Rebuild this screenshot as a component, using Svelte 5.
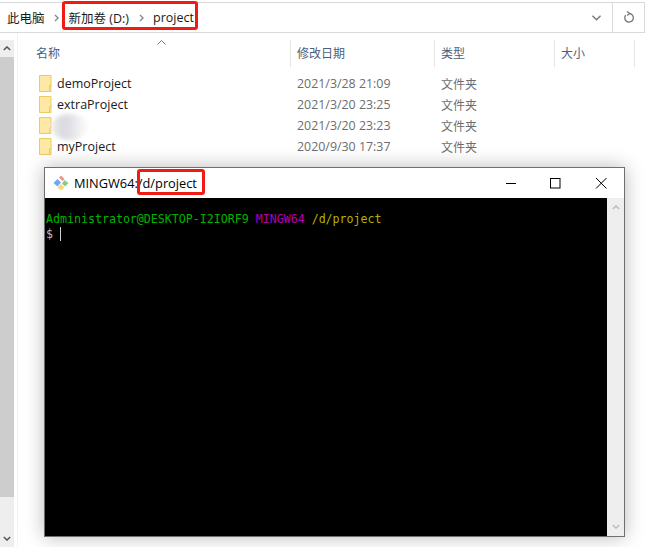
<script>
  const folders = [
    { name: 'demoProject', date: '2021/3/28 21:09' },
    { name: 'extraProject', date: '2021/3/20 23:25' },
    { name: '', date: '2021/3/20 23:23', blurred: true },
    { name: 'myProject', date: '2020/9/30 17:37' }
  ];
</script>

<div class="desktop">
  <div class="address">
    <div class="crumbs">
      <span>此电脑</span>
      <svg class="sep" viewBox="0 0 5 8"><path d="M1 1 L4 4 L1 7" /></svg>
      <span>新加卷 (D:)</span>
      <svg class="sep" viewBox="0 0 5 8"><path d="M1 1 L4 4 L1 7" /></svg>
      <span>project</span>
    </div>
    <svg class="drop" viewBox="0 0 10 6"><path d="M0.5 0.5 L5 5 L9.5 0.5" /></svg>
    <div class="refresh">
      <svg viewBox="0 0 12 13"><path d="M6.5 2.5 A4.3 4.3 0 1 1 2.6 4.2" /><path class="head" d="M4 0.5 L6.8 2.5 L4 4.6" /></svg>
    </div>
  </div>

  <div class="pane">
    <div class="vscroll">
      <svg class="arrow" viewBox="0 0 10 6"><path d="M1 5 L5 1 L9 5" /></svg>
      <div class="thumb"></div>
      <div class="track"></div>
      <svg class="arrow" viewBox="0 0 10 6"><path d="M1 1 L5 5 L9 1" /></svg>
    </div>
    <div class="list">
      <div class="head-row">
        <div class="col c-name">名称<svg class="sort" viewBox="0 0 9 5"><path d="M0.5 4.5 L4.5 0.5 L8.5 4.5" /></svg></div>
        <div class="col c-date">修改日期</div>
        <div class="col c-type">类型</div>
        <div class="col c-size">大小</div>
      </div>
      {#each folders as f}
        <div class="row">
          <div class="file">
            <svg class="folder" viewBox="0 0 13 17">
              <path class="fill" d="M0.5 0.5 H12 V16.5 H0.5 Z" />
              <path class="fold" d="M10.5 16 V10.5 H12.5" />
            </svg>
            <span>{f.name}</span>
            {#if f.blurred}<div class="smudge"></div>{/if}
          </div>
          <div class="cell when">{f.date}</div>
          <div class="cell">文件夹</div>
        </div>
      {/each}
    </div>
  </div>

  <div class="terminal">
    <div class="titlebar">
      <svg class="git" viewBox="0 0 16 16">
        <path d="M8 0.5 L11.5 4 L9.5 6 L6 2.5 Z" fill="#f0908c" />
        <path d="M4.5 4 L8 7.5 L4.5 11.5 L0.5 8 Z" fill="#6fa8ee" />
        <path d="M11.5 5 L15.5 8 L12 11.5 L9 8.5 Z" fill="#8cc98a" />
        <path d="M8 9 L11.5 12.5 L8 15.5 L4.5 12.5 Z" fill="#f5d878" />
      </svg>
      <span class="title">MINGW64:/d/project</span>
      <svg class="win" viewBox="0 0 16 16"><path d="M5 8.5 H15" /></svg>
      <svg class="win" viewBox="0 0 16 16"><rect x="3.5" y="3.5" width="9.5" height="9.5" /></svg>
      <svg class="win" viewBox="0 0 16 16"><path d="M3 3 L13.5 13.5 M13.5 3 L3 13.5" /></svg>
    </div>
    <div class="body">
      <div class="screen">
        <div class="line"><span class="green">Administrator@DESKTOP-I2IORF9</span> <span class="magenta">MINGW64</span> <span class="yellow">/d/project</span></div>
        <div class="line prompt">$ <span class="cursor"></span></div>
      </div>
      <div class="tscroll">
        <svg viewBox="0 0 10 6"><path d="M1 5 L5 1 L9 5" /></svg>
        <svg viewBox="0 0 10 6"><path d="M1 1 L5 5 L9 1" /></svg>
      </div>
    </div>
  </div>

  <div class="mark mark-path"></div>
  <div class="mark mark-title"></div>
</div>

<style>
  :global(body) {
    margin: 0;
    background: #fff;
  }

  .desktop {
    position: relative;
    width: 654px;
    height: 547px;
    overflow: hidden;
    background: #fff;
    font-family: "Open Sans", "Noto Sans CJK SC", sans-serif;
    font-size: 12px;
    color: #1a1a1a;
  }

  .address {
    display: flex;
    align-items: center;
    box-sizing: border-box;
    width: 645px;
    height: 31px;
    margin-top: 2px;
    border: 1px solid #d9d9d9;
    border-left: 0;
  }

  .crumbs {
    display: flex;
    align-items: center;
    flex: 1;
    gap: 9.5px;
    padding-left: 7px;
    font-size: 12.5px;
  }

  .sep {
    width: 5px;
    height: 8px;
    fill: none;
    stroke: #8a8a8a;
    stroke-width: 1.4;
  }

  .drop {
    width: 9px;
    height: 6px;
    margin-right: 11px;
    fill: none;
    stroke: #777;
    stroke-width: 1.5;
  }

  .refresh {
    display: flex;
    align-items: center;
    justify-content: center;
    width: 31px;
    height: 100%;
    border-left: 1px solid #d9d9d9;
  }

  .refresh svg {
    width: 12px;
    height: 13px;
    fill: none;
    stroke: #777;
    stroke-width: 1.3;
  }

  .pane {
    display: flex;
    height: 514px;
  }

  .vscroll {
    display: flex;
    flex-direction: column;
    width: 14px;
    margin-top: 7px;
    background: #eeeeee;
  }

  .arrow {
    flex-shrink: 0;
    width: 8px;
    height: 5px;
    margin: 6px 3px;
    fill: none;
    stroke: #555;
    stroke-width: 1.8;
  }

  .thumb {
    height: 440px;
    background: #cdcdcd;
  }

  .track {
    flex: 1;
  }

  .list {
    flex: 1;
    margin-left: 3px;
    border-left: 1px solid #f2f2f2;
  }

  .head-row {
    display: flex;
    height: 27px;
    margin-top: 7px;
    margin-bottom: 6px;
    color: #4c607a;
  }

  .col {
    position: relative;
    box-sizing: border-box;
    height: 27px;
    line-height: 27px;
    padding-left: 6px;
    border-right: 1px solid #e5e5e5;
  }

  .sort {
    position: absolute;
    top: 0;
    left: 139px;
    width: 9px;
    height: 5px;
    fill: none;
    stroke: #777;
    stroke-width: 1;
  }

  .c-name {
    width: 273px;
    padding-left: 18px;
  }

  .c-date { width: 144px; }
  .c-type { width: 120px; }
  .c-size { width: 80px; }

  .row {
    display: flex;
    align-items: center;
    height: 21px;
  }

  .file {
    position: relative;
    display: flex;
    align-items: center;
    gap: 5px;
    box-sizing: border-box;
    width: 279px;
    padding-left: 21px;
    font-size: 12.5px;
    color: #1a1a1a;
  }

  .cell {
    color: #6d6d6d;
    font-size: 12px;
  }

  .when {
    width: 144px;
    font-size: 12.4px;
  }

  .folder {
    width: 13px;
    height: 17px;
  }

  .fill {
    fill: #fde9a4;
    stroke: #eccb62;
  }

  .fold {
    fill: none;
    stroke: #eccb62;
  }

  .smudge {
    position: absolute;
    left: 33px;
    top: -3px;
    width: 37px;
    height: 26px;
    border-radius: 50%;
    background: linear-gradient(90deg, #f6f3ea 0, #dcdce2 25%, #dcdce2 45%, #e6e6ea 60%, #f8f8f8 90%);
    filter: blur(2px);
  }

  .terminal {
    position: absolute;
    left: 44px;
    top: 167px;
    box-sizing: border-box;
    width: 581px;
    height: 370px;
    border: 1px solid #6f6f6f;
    background: #fff;
    box-shadow: 0 0 18px rgba(0, 0, 0, 0.28);
  }

  .titlebar {
    display: flex;
    align-items: center;
    height: 30px;
    padding-left: 8px;
  }

  .git {
    width: 16px;
    height: 16px;
    margin-right: 5px;
  }

  .title {
    flex: 1;
    font-size: 12.8px;
    color: #000;
  }

  .win {
    width: 16px;
    height: 16px;
    margin-right: 30px;
    fill: none;
    stroke: #000;
    stroke-width: 1;
  }

  .win:last-child {
    margin-right: 15px;
  }

  .body {
    display: flex;
    height: 338px;
  }

  .screen {
    flex: 1;
    padding: 14px 0 0 1px;
    background: #000;
    font-family: "DejaVu Sans Mono", monospace;
    font-size: 11.62px;
    line-height: 15px;
  }

  .line {
    height: 15px;
    white-space: pre;
  }

  .green { color: #00b300; }
  .magenta { color: #b300b3; }
  .yellow { color: #b3b300; }

  .prompt {
    color: #bfbfbf;
  }

  .cursor {
    display: inline-block;
    width: 1px;
    height: 14px;
    vertical-align: -3px;
    background: #d0d0d0;
  }

  .tscroll {
    display: flex;
    flex-direction: column;
    justify-content: space-between;
    align-items: center;
    box-sizing: border-box;
    width: 17px;
    padding: 7px 0;
    background: #eeeeee;
  }

  .tscroll svg {
    width: 8px;
    height: 5px;
    fill: none;
    stroke: #bdbdbd;
    stroke-width: 1.8;
  }

  .mark {
    position: absolute;
    box-sizing: border-box;
    border: 3px solid #f01c14;
    border-radius: 3px;
  }

  .mark-path {
    left: 62px;
    top: 1px;
    width: 136px;
    height: 29px;
  }

  .mark-title {
    left: 137px;
    top: 169px;
    width: 68px;
    height: 26px;
  }
</style>
